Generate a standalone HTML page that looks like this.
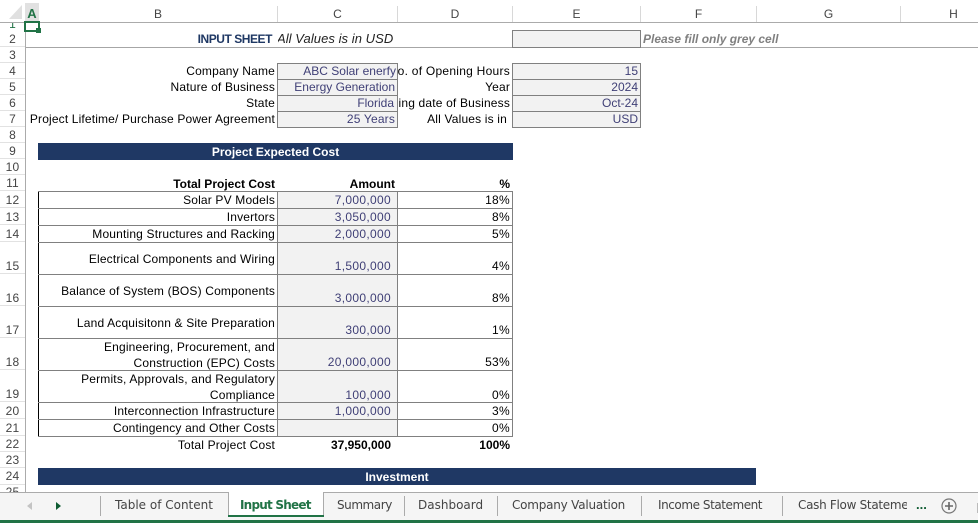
<!DOCTYPE html>
<html><head><meta charset="utf-8"><style>
html,body{margin:0;padding:0;width:978px;height:523px;overflow:hidden;background:#fff}
body{position:relative;font-family:"Liberation Sans",Arial,sans-serif;font-size:12px;color:#000}
.a,.t,.r,.c,.h,.n,.i,.g{position:absolute}
.t{white-space:nowrap;line-height:16px;height:16px;text-align:right;letter-spacing:.17px}
.i{color:#3f3f76}
.t.i{letter-spacing:.32px}
.t.i.x{letter-spacing:0}
.t.p{letter-spacing:.3px}
.c{top:6px;height:16px;line-height:16px;text-align:center;color:#444}
.c.sep{border-right:1px solid #d8d8d8}
.n{left:0;width:25px;text-align:center;color:#444;line-height:16px;height:16px;border-bottom:1px solid #e2e2e2;overflow:hidden;letter-spacing:.2px}
.g{background:#f2f2f2;border:1px solid #808080;box-sizing:border-box}
.l{position:absolute;background:#808080}
.b,.t.b{font-weight:bold;letter-spacing:0}
.tab{position:absolute;top:492px;height:27px;line-height:27px;font-family:"DejaVu Sans",sans-serif;font-size:12px;color:#444;white-space:nowrap}
.s{position:absolute;top:496px;width:1px;height:20px;background:#ababab}
</style></head><body>
<!-- column headers -->
<div class="a" style="left:25px;top:3px;width:14px;height:19px;background:#e1e1e1"></div>
<svg class="a" style="left:8px;top:4px" width="16" height="16"><path d="M14 1V15H1Z" fill="#e0e0e0"/></svg>
<div class="c b" style="left:25px;width:14px;color:#217346;font-size:13px">A</div>
<div class="c sep" style="left:39px;width:238px">B</div>
<div class="c sep" style="left:278px;width:119px">C</div>
<div class="c sep" style="left:398px;width:114px">D</div>
<div class="c sep" style="left:513px;width:127px">E</div>
<div class="c sep" style="left:641px;width:115px">F</div>
<div class="c sep" style="left:757px;width:143px">G</div>
<div class="c" style="left:901px;width:105px">H</div>
<div class="a" style="left:0;top:22px;width:978px;height:1px;background:#ababab"></div>
<!-- row header -->
<div class="a" style="left:25px;top:23px;width:1px;height:469px;background:#ababab"></div>
<div class="n" style="top:23px;height:8px;line-height:2px;border-bottom:0;color:#217346">1</div>
<div class="n" style="top:31px;height:15px;line-height:17px">2</div>
<div class="n" style="top:47px;height:15px">3</div>
<div class="n" style="top:63px;height:15px">4</div>
<div class="n" style="top:79px;height:15px">5</div>
<div class="n" style="top:95px;height:15px">6</div>
<div class="n" style="top:111px;height:15px">7</div>
<div class="n" style="top:127px;height:15px">8</div>
<div class="n" style="top:143px;height:15px">9</div>
<div class="n" style="top:159px;height:15px">10</div>
<div class="n" style="top:175px;height:15px">11</div>
<div class="n" style="top:191px;height:16px;line-height:18px">12</div>
<div class="n" style="top:208px;height:16px;line-height:18px">13</div>
<div class="n" style="top:225px;height:16px;line-height:18px">14</div>
<div class="n" style="top:242px;height:31px;line-height:48px">15</div>
<div class="n" style="top:274px;height:31px;line-height:48px">16</div>
<div class="n" style="top:306px;height:31px;line-height:48px">17</div>
<div class="n" style="top:338px;height:31px;line-height:48px">18</div>
<div class="n" style="top:370px;height:31px;line-height:48px">19</div>
<div class="n" style="top:402px;height:16px;line-height:18px">20</div>
<div class="n" style="top:419px;height:16px;line-height:18px">21</div>
<div class="n" style="top:436px;height:15px">22</div>
<div class="n" style="top:452px;height:15px">23</div>
<div class="n" style="top:468px;height:16px;line-height:17px">24</div>
<div class="n" style="top:485px;height:7px;line-height:14px;border-bottom:0">25</div>
<!-- selection -->
<div class="a" style="left:24px;top:21px;width:16px;height:11px;border:2px solid #217346;box-sizing:border-box;background:#fff"></div>
<div class="a" style="left:36px;top:28px;width:5px;height:5px;background:#217346"></div>
<!-- row 2 -->
<div class="a" style="left:26px;top:47px;width:952px;height:1px;background:#a6a6a6"></div>
<div class="t b" style="left:38px;width:234px;top:31px;color:#1f3864;letter-spacing:-.45px">INPUT SHEET</div>
<div class="a" style="left:278px;top:31px;width:118px;height:16px;overflow:hidden"><div class="t" style="left:-1px;top:0;font-style:italic;font-size:13px;color:#222;letter-spacing:.06px">All Values is in USD</div></div>
<div class="g" style="left:512px;top:30px;width:129px;height:18px"></div>
<div class="t b" style="left:643px;top:31px;font-style:italic;color:#808080">Please fill only grey cell</div>
<!-- info block -->
<div class="g" style="left:277px;top:63px;width:121px;height:65px"></div>
<div class="g" style="left:512px;top:63px;width:129px;height:65px"></div>
<div class="l" style="left:277px;top:79px;width:120px;height:1px"></div>
<div class="l" style="left:277px;top:95px;width:120px;height:1px"></div>
<div class="l" style="left:277px;top:111px;width:120px;height:1px"></div>
<div class="l" style="left:512px;top:79px;width:128px;height:1px"></div>
<div class="l" style="left:512px;top:95px;width:128px;height:1px"></div>
<div class="l" style="left:512px;top:111px;width:128px;height:1px"></div>
<div class="t" style="left:20px;width:255px;top:63px">Company Name</div>
<div class="t" style="left:20px;width:255px;top:79px">Nature of Business</div>
<div class="t" style="left:20px;width:255px;top:95px">State</div>
<div class="t" style="left:20px;width:255px;top:111px;letter-spacing:.15px">Project Lifetime/ Purchase Power Agreement</div>
<div class="t i x" style="left:278px;width:118px;top:63px;overflow:hidden"><span style="position:absolute;right:0">ABC Solar enerfy</span></div>
<div class="t i x" style="left:278px;width:117px;top:79px">Energy Generation</div>
<div class="t i x" style="left:278px;width:116px;top:95px">Florida</div>
<div class="t i" style="left:278px;width:117px;top:111px;letter-spacing:.17px">25 Years</div>
<div class="a" style="left:398px;top:63px;width:112px;height:16px;overflow:hidden"><div class="t" style="right:0;top:0;letter-spacing:.26px">No. of Opening Hours</div></div>
<div class="t" style="left:398px;width:112px;top:79px">Year</div>
<div class="a" style="left:398px;top:95px;width:112px;height:16px;overflow:hidden"><div class="t" style="right:0;top:0">Opening date of Business</div></div>
<div class="t" style="left:398px;width:109px;top:111px">All Values is in</div>
<div class="t i x" style="left:513px;width:125px;top:63px">15</div>
<div class="t i x" style="left:513px;width:125px;top:79px">2024</div>
<div class="t i x" style="left:513px;width:125px;top:95px">Oct-24</div>
<div class="t i x" style="left:513px;width:125px;top:111px">USD</div>
<!-- section header -->
<div class="a" style="left:38px;top:143px;width:475px;height:17px;background:#1f3864;color:#fff;font-weight:bold;text-align:center;line-height:18px">Project Expected Cost</div>
<div class="t b" style="left:38px;width:237px;top:176px">Total Project Cost</div>
<div class="t b" style="left:278px;width:117px;top:176px">Amount</div>
<div class="t b" style="left:398px;width:112px;top:176px">%</div>
<!-- table -->
<div class="a" style="left:277px;top:191px;width:121px;height:246px;background:#f2f2f2"></div>
<div class="a" style="left:38px;top:191px;width:1px;height:246px;background:#000"></div>
<div class="l" style="left:277px;top:191px;width:1px;height:246px"></div>
<div class="l" style="left:397px;top:191px;width:1px;height:246px"></div>
<div class="l" style="left:512px;top:191px;width:1px;height:246px"></div>
<div class="l" style="left:38px;top:191px;width:475px;height:1px"></div>
<div class="l" style="left:38px;top:208px;width:475px;height:1px"></div>
<div class="l" style="left:38px;top:225px;width:475px;height:1px"></div>
<div class="l" style="left:38px;top:242px;width:475px;height:1px"></div>
<div class="l" style="left:38px;top:274px;width:475px;height:1px"></div>
<div class="l" style="left:38px;top:306px;width:475px;height:1px"></div>
<div class="l" style="left:38px;top:338px;width:475px;height:1px"></div>
<div class="l" style="left:38px;top:370px;width:475px;height:1px"></div>
<div class="l" style="left:38px;top:402px;width:475px;height:1px"></div>
<div class="l" style="left:38px;top:419px;width:475px;height:1px"></div>
<div class="l" style="left:38px;top:436px;width:475px;height:1px"></div>
<div class="t" style="left:39px;width:236px;top:192px">Solar PV Models</div>
<div class="t" style="left:39px;width:236px;top:209px">Invertors</div>
<div class="t" style="left:39px;width:236px;top:226px">Mounting Structures and Racking</div>
<div class="t" style="left:39px;width:236px;top:251px">Electrical Components and Wiring</div>
<div class="t" style="left:39px;width:236px;top:283px">Balance of System (BOS) Components</div>
<div class="t" style="left:39px;width:236px;top:315px">Land Acquisitonn &amp; Site Preparation</div>
<div class="t" style="left:39px;width:236px;top:339px">Engineering, Procurement, and</div>
<div class="t" style="left:39px;width:236px;top:355px">Construction (EPC) Costs</div>
<div class="t" style="left:39px;width:236px;top:371px">Permits, Approvals, and Regulatory</div>
<div class="t" style="left:39px;width:236px;top:387px">Compliance</div>
<div class="t" style="left:39px;width:236px;top:403px">Interconnection Infrastructure</div>
<div class="t" style="left:39px;width:236px;top:420px">Contingency and Other Costs</div>
<div class="t" style="left:39px;width:236px;top:437px">Total Project Cost</div>
<div class="t i" style="left:278px;width:113px;top:192px">7,000,000</div>
<div class="t i" style="left:278px;width:113px;top:209px">3,050,000</div>
<div class="t i" style="left:278px;width:113px;top:226px">2,000,000</div>
<div class="t i" style="left:278px;width:113px;top:258px">1,500,000</div>
<div class="t i" style="left:278px;width:113px;top:290px">3,000,000</div>
<div class="t i" style="left:278px;width:113px;top:322px">300,000</div>
<div class="t i" style="left:278px;width:113px;top:354px">20,000,000</div>
<div class="t i" style="left:278px;width:113px;top:387px">100,000</div>
<div class="t i" style="left:278px;width:113px;top:403px">1,000,000</div>
<div class="t b" style="left:278px;width:113px;top:437px">37,950,000</div>
<div class="t p" style="left:398px;width:112px;top:192px">18%</div>
<div class="t p" style="left:398px;width:112px;top:209px">8%</div>
<div class="t p" style="left:398px;width:112px;top:226px">5%</div>
<div class="t p" style="left:398px;width:112px;top:258px">4%</div>
<div class="t p" style="left:398px;width:112px;top:290px">8%</div>
<div class="t p" style="left:398px;width:112px;top:322px">1%</div>
<div class="t p" style="left:398px;width:112px;top:354px">53%</div>
<div class="t p" style="left:398px;width:112px;top:387px">0%</div>
<div class="t p" style="left:398px;width:112px;top:403px">3%</div>
<div class="t p" style="left:398px;width:112px;top:420px">0%</div>
<div class="t b" style="left:398px;width:112px;top:437px">100%</div>
<div class="a" style="left:38px;top:468px;width:718px;height:17px;background:#1f3864;color:#fff;font-weight:bold;text-align:center;line-height:18px">Investment</div>
<!-- tab bar -->
<div class="a" style="left:0;top:492px;width:978px;height:28px;background:#f5f5f5"></div>
<div class="a" style="left:0;top:492px;width:978px;height:1px;background:#ababab"></div>
<div class="a" style="left:0;top:520px;width:978px;height:3px;background:#217346"></div>
<svg class="a" style="left:24px;top:500px" width="40" height="12"><path d="M8 2L3 6L8 10Z" fill="#c4c4c4"/><path d="M32 2L37 6L32 10Z" fill="#0f5c32"/></svg>
<div class="s" style="left:100px"></div>
<div class="tab" style="left:115px">Table of Content</div>
<div class="a" style="left:228px;top:492px;width:96px;height:25px;background:#fff;border:1px solid #ababab;border-top:0;border-bottom:0;box-sizing:border-box"></div>
<div class="a" style="left:228px;top:515px;width:96px;height:2px;background:#217346"></div>
<div class="tab" style="left:240px;font-weight:bold;color:#217346;letter-spacing:-.78px">Input Sheet</div>
<div class="tab" style="left:337px;letter-spacing:-.45px">Summary</div>
<div class="s" style="left:404px"></div>
<div class="tab" style="left:418px">Dashboard</div>
<div class="s" style="left:497px"></div>
<div class="tab" style="left:512px;letter-spacing:-.22px">Company Valuation</div>
<div class="s" style="left:641px"></div>
<div class="tab" style="left:658px;letter-spacing:-.44px">Income Statement</div>
<div class="s" style="left:782px"></div>
<div class="a" style="left:798px;top:492px;width:109px;height:27px;overflow:hidden"><div class="tab" style="left:0;top:0;letter-spacing:-.3px">Cash Flow Statement</div></div>
<div class="tab b" style="left:916px;top:491px;color:#0f5c32;font-family:'Liberation Sans',sans-serif;font-size:13px">...</div>
<svg class="a" style="left:940px;top:497px" width="18" height="18"><circle cx="9" cy="9" r="7" fill="none" stroke="#777" stroke-width="1.2"/><path d="M5 9H13M9 5V13" stroke="#666" stroke-width="1.6"/></svg>
<div class="a" style="left:977px;top:503px;width:1px;height:10px;background:#bbb"></div>
</body></html>
